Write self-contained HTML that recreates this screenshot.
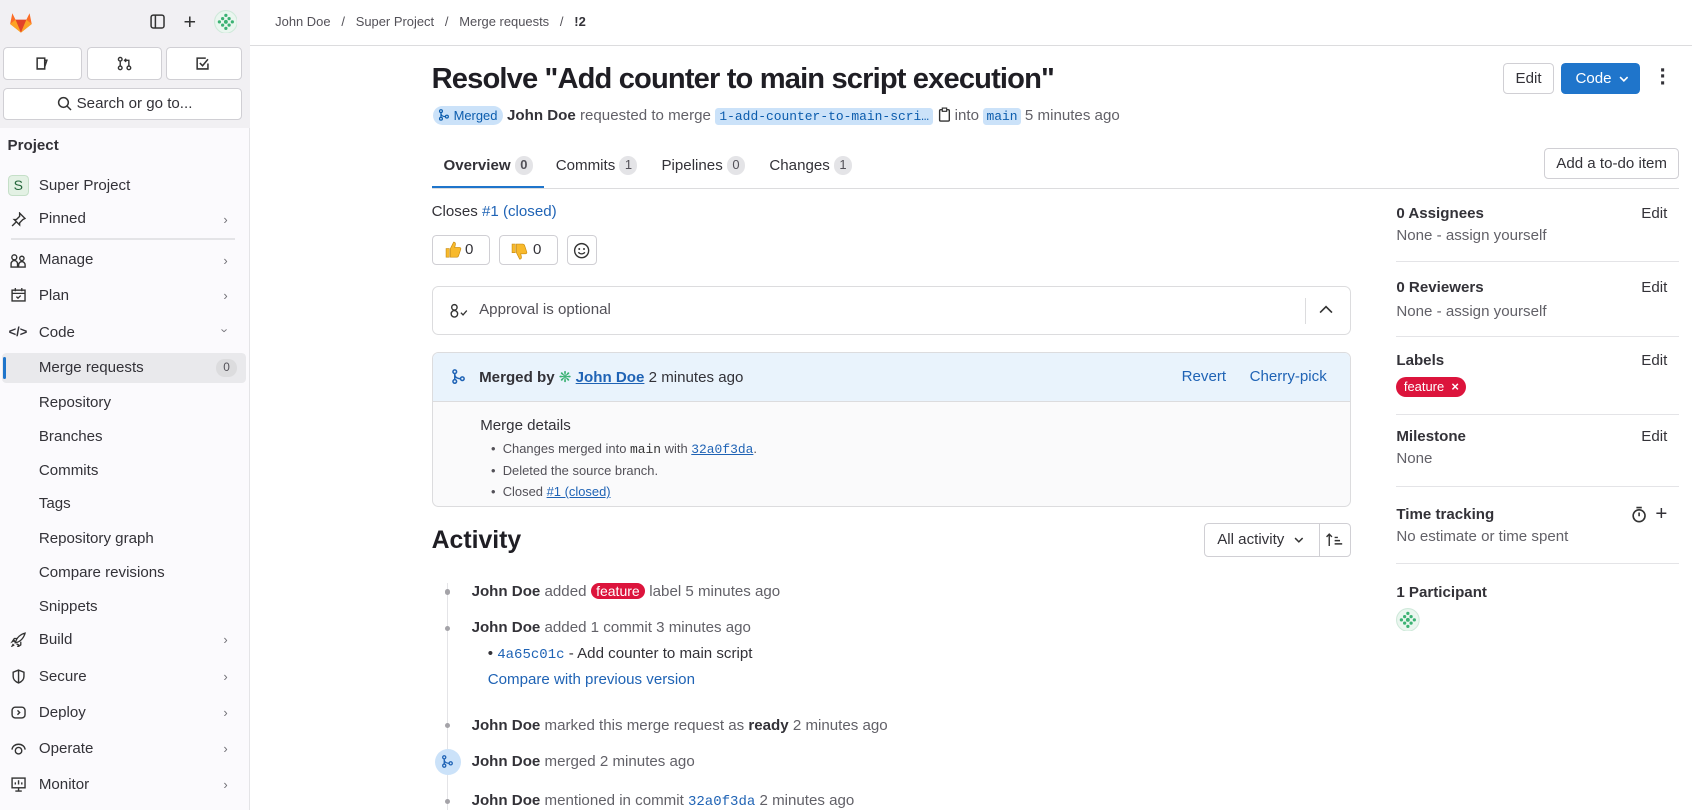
<!DOCTYPE html>
<html><head><meta charset="utf-8"><style>
*{box-sizing:border-box;margin:0;padding:0}
html,body{width:1692px;height:810px;overflow:hidden;background:#fff}
#w{zoom:1.0791;width:1568px;height:751px;position:relative;font-family:"Liberation Sans",sans-serif;font-size:14px;color:#333238;overflow:hidden}
.a{position:absolute;white-space:nowrap}
.sb{position:absolute;left:0;top:0;width:232px;height:751px;background:#fbfafd;border-right:1px solid #e4e4e7}
.sbt{position:absolute;left:0;top:0;width:232px;height:119px;background:#f1f0f3}
.btn{position:absolute;background:#fff;border:1px solid #d0cfd4;border-radius:4px}
.nav{position:absolute;left:36px;font-size:14px;color:#333238}
.chev{position:absolute;left:207px;color:#737278;font-size:12px}
.mono{font-family:"Liberation Mono",monospace}
.link{color:#1f63b5}
.badge{display:inline-block;background:#e4e4e7;border-radius:10px;font-size:12px;padding:0 5px;color:#535158;line-height:17px;vertical-align:1px}
.sep{position:absolute;left:1294px;width:262px;height:1px;background:#e4e4e7}
.rh{position:absolute;left:1294px;font-weight:bold;color:#333238}
.rs{position:absolute;left:1294px;color:#626168}
.re{position:absolute;left:1521px;color:#333238}
.dot{position:absolute;left:412px;width:5px;height:5px;border-radius:50%;background:#a4a3a8}
</style></head><body><div id="w">
<svg width="0" height="0" style="position:absolute"><defs><symbol id="mr" viewBox="0 0 14 14"><circle cx="3.5" cy="2.5" r="1.7" fill="none" stroke="currentColor" stroke-width="1.4"/><circle cx="3.5" cy="11.5" r="1.7" fill="none" stroke="currentColor" stroke-width="1.4"/><circle cx="10.5" cy="9" r="1.7" fill="none" stroke="currentColor" stroke-width="1.4"/><path d="M3.5 4.2v5.6M3.5 5c0 3 3 4 5.3 4" fill="none" stroke="currentColor" stroke-width="1.4"/></symbol></defs></svg>
<div class="sb"></div><div class="sbt"></div>
<svg class="a" style="left:7px;top:9px" width="24" height="22" viewBox="0 0 24 22"><path d="M12 21 2 13 4 3 7 9h10l3-6 2 10z" fill="#fc6d26"/><path d="M12 21 7 9h10z" fill="#e24329"/><path d="M12 21 2 13 7 9z" fill="#fca326"/><path d="M12 21l10-8-5-4z" fill="#fca326"/></svg>
<svg class="a" style="left:139px;top:13px" width="14" height="14" viewBox="0 0 14 14"><rect x="1" y="1" width="12" height="12" rx="2" fill="none" stroke="#333" stroke-width="1.4"/><path d="M5 1v12" stroke="#333" stroke-width="1.4"/></svg>
<div class="a" style="left:170px;top:8px;font-size:20px;color:#333">+</div>
<svg class="a" style="left:198px;top:9px" width="22" height="22" viewBox="0 0 22 22"><circle cx="11" cy="11" r="10.5" fill="#eaf6ef" stroke="#cfe9da"/><g fill="#3bb273"><circle cx="11" cy="5" r="1.5"/><circle cx="11" cy="17" r="1.5"/><circle cx="5" cy="11" r="1.5"/><circle cx="17" cy="11" r="1.5"/><circle cx="8" cy="8" r="1.5"/><circle cx="14" cy="8" r="1.5"/><circle cx="8" cy="14" r="1.5"/><circle cx="14" cy="14" r="1.5"/><circle cx="11" cy="11" r="1.8"/></g></svg>
<div class="btn" style="left:3px;top:44px;width:73px;height:30px"></div>
<div class="btn" style="left:81px;top:44px;width:69px;height:30px"></div>
<div class="btn" style="left:154px;top:44px;width:70px;height:30px"></div>
<svg class="a" style="left:32px;top:52px" width="14" height="14" viewBox="0 0 14 14"><path d="M2 2h7v10H2z M9 4h2l-2 6" fill="none" stroke="#333" stroke-width="1.4"/></svg>
<svg class="a" style="left:108px;top:52px" width="14" height="14" viewBox="0 0 14 14"><circle cx="3" cy="3" r="1.7" fill="none" stroke="#333" stroke-width="1.3"/><circle cx="3" cy="11" r="1.7" fill="none" stroke="#333" stroke-width="1.3"/><circle cx="11" cy="11" r="1.7" fill="none" stroke="#333" stroke-width="1.3"/><path d="M3 5v4M11 9V4H7m1.5-1.5L7 4l1.5 1.5" fill="none" stroke="#333" stroke-width="1.3"/></svg>
<svg class="a" style="left:181px;top:52px" width="14" height="14" viewBox="0 0 14 14"><path d="M12 7v5H2V2h8" fill="none" stroke="#333" stroke-width="1.4"/><path d="M4.5 6.5 7 9l5-6" fill="none" stroke="#333" stroke-width="1.4"/></svg>
<div class="btn" style="left:3px;top:82px;width:221px;height:29px"></div>
<svg class="a" style="left:53px;top:89px" width="14" height="14" viewBox="0 0 14 14"><circle cx="6" cy="6" r="4.5" fill="none" stroke="#333" stroke-width="1.4"/><path d="M9.5 9.5 13 13" stroke="#333" stroke-width="1.4"/></svg>
<div class="a" style="left:71px;top:88px;font-size:14px">Search or go to...</div>
<div class="a" style="left:7px;top:127px;font-weight:bold">Project</div>
<div class="a" style="left:7px;top:162px;width:20px;height:20px;background:#e3f1e4;border:1px solid #c5dfc8;border-radius:4px;text-align:center;line-height:18px;color:#24663b;font-size:13px">S</div>
<div class="nav" style="top:164px">Super Project</div>
<div class="nav" style="top:195px">Pinned</div><div class="chev" style="top:196px">›</div>
<svg class="a" style="left:10px;top:196px" width="14" height="14"><path d="M8 1l5 5-2 1-3 3 0 2-5-5 2 0 3-3zM4.5 9.5 1 13" fill="none" stroke="#333" stroke-width="1.3"/></svg>
<div class="a" style="left:10px;top:221px;width:208px;height:1px;background:#e4e4e7"></div>
<div class="nav" style="top:233px">Manage</div><div class="chev" style="top:234px">›</div>
<svg class="a" style="left:9px;top:234px" width="16" height="14"><circle cx="4" cy="4" r="2.3" fill="none" stroke="#333" stroke-width="1.3"/><circle cx="11" cy="5" r="2" fill="none" stroke="#333" stroke-width="1.3"/><path d="M1 13V10a3 3 0 0 1 6 0v3zM8 13v-2a3 3 0 0 1 6 0v2z" fill="none" stroke="#333" stroke-width="1.3"/></svg>
<div class="nav" style="top:266px">Plan</div><div class="chev" style="top:267px">›</div>
<svg class="a" style="left:10px;top:267px" width="14" height="14"><rect x="1" y="2" width="12" height="10" fill="none" stroke="#333" stroke-width="1.3"/><path d="M1 5h12M4 0v3M10 0v3M5 8l1.5 1.5L9 7" fill="none" stroke="#333" stroke-width="1.2"/></svg>
<div class="nav" style="top:300px">Code</div><div class="chev" style="top:299px;transform:rotate(90deg)">›</div><div class="a" style="left:8px;top:300px;font-size:12px;font-weight:bold">&lt;/&gt;</div>
<div class="a" style="left:2px;top:327px;width:226px;height:28px;background:#e9e9ec;border-radius:4px"></div>
<div class="a" style="left:3px;top:331px;width:3px;height:20px;background:#1f75cb;border-radius:2px"></div>
<div class="nav" style="top:333px">Merge requests</div>
<div class="a" style="left:200px;top:333px;width:20px;height:16px;background:#dcdcde;border-radius:8px;font-size:11px;text-align:center;line-height:16px;color:#535158">0</div>
<div class="nav" style="top:365px">Repository</div>
<div class="nav" style="top:397px">Branches</div>
<div class="nav" style="top:428px">Commits</div>
<div class="nav" style="top:459px">Tags</div>
<div class="nav" style="top:491px">Repository graph</div>
<div class="nav" style="top:523px">Compare revisions</div>
<div class="nav" style="top:554px">Snippets</div>
<div class="nav" style="top:585px">Build</div><div class="chev" style="top:586px">›</div>
<svg class="a" style="left:9px;top:586px" width="16" height="14"><path d="M3 11 2 13l2-1M5 10c1-5 5-8 9-9-1 4-4 8-9 9zM5 10 4 8 2 9l2-3h3M6 11l2 1-1 2 3-2V9" fill="none" stroke="#333" stroke-width="1.2"/></svg>
<div class="nav" style="top:619px">Secure</div><div class="chev" style="top:620px">›</div>
<svg class="a" style="left:10px;top:620px" width="14" height="14"><path d="M7 1 2 3v4c0 3 2.5 5 5 6 2.5-1 5-3 5-6V3z M7 1v12" fill="none" stroke="#333" stroke-width="1.3"/></svg>
<div class="nav" style="top:652px">Deploy</div><div class="chev" style="top:653px">›</div>
<svg class="a" style="left:10px;top:653px" width="14" height="14"><rect x="1" y="2" width="12" height="10" rx="3" fill="none" stroke="#333" stroke-width="1.3"/><path d="M6 5l2 2-2 2" fill="none" stroke="#333" stroke-width="1.3"/></svg>
<div class="nav" style="top:686px">Operate</div><div class="chev" style="top:687px">›</div>
<svg class="a" style="left:10px;top:687px" width="14" height="14"><path d="M1 8a6 5 0 0 1 12 0" fill="none" stroke="#333" stroke-width="1.3"/><circle cx="7" cy="9" r="3" fill="none" stroke="#333" stroke-width="1.3"/></svg>
<div class="nav" style="top:719px">Monitor</div><div class="chev" style="top:720px">›</div>
<svg class="a" style="left:10px;top:720px" width="14" height="14"><rect x="1" y="1" width="12" height="9" fill="none" stroke="#333" stroke-width="1.3"/><path d="M4 13h6M7 10v3M4 7V5M7 7V3M10 7V5" stroke="#333" stroke-width="1.3"/></svg>

<div class="a" style="left:232px;top:42px;width:1336px;height:1px;background:#dcdcde"></div>
<div class="a" style="left:255px;top:13px;font-size:12px;color:#535158">John Doe &nbsp;&nbsp;/&nbsp;&nbsp; Super Project &nbsp;&nbsp;/&nbsp;&nbsp; Merge requests &nbsp;&nbsp;/&nbsp;&nbsp; <b style="color:#333238">!2</b></div>

<div class="a" style="left:400px;top:58px;font-size:27px;font-weight:bold;color:#1f1e24;letter-spacing:-0.8px">Resolve "Add counter to main script execution"</div>
<div class="btn" style="left:1393px;top:58px;width:47px;height:29px;text-align:center;line-height:27px">Edit</div>
<div class="a" style="left:1447px;top:58px;width:73px;height:29px;background:#1f75cb;border-radius:4px;color:#fff;line-height:29px;padding-left:13px">Code</div>
<svg class="a" style="left:1500px;top:70px" width="9" height="6"><path d="M1 1l3.5 3.5L8 1" fill="none" stroke="#fff" stroke-width="1.5"/></svg>
<div class="a" style="left:1538px;top:62px;width:4px;line-height:6px;font-size:20px;font-weight:bold">·<br>·<br>·</div>

<div class="a" style="left:401px;top:98px;font-size:14px;color:#626168;line-height:18px">
<span style="display:inline-block;background:#cbe2f9;color:#0b5cad;border-radius:9px;padding:0 5px 0 5px;font-size:12px;line-height:18px"><svg width="11" height="11" style="vertical-align:-1px;color:#0b5cad"><use href="#mr"/></svg> Merged</span>
<b style="color:#333238">John Doe</b> requested to merge <span class="mono" style="background:#cbe2f9;color:#0b5cad;border-radius:3px;padding:1px 4px;font-size:12px">1-add-counter-to-main-scri…</span> <svg width="12" height="14" style="vertical-align:-2px"><rect x="1.5" y="2.5" width="9" height="10.5" rx="1" fill="none" stroke="#333" stroke-width="1.3"/><rect x="4" y="1" width="4" height="3" fill="#fff" stroke="#333" stroke-width="1.1"/></svg> into <span class="mono" style="background:#cbe2f9;color:#0b5cad;border-radius:3px;padding:1px 3px;font-size:12px">main</span> 5 minutes ago</div>

<div class="a" style="left:411px;top:145px;color:#333238;font-weight:bold">Overview <span class="badge">0</span></div>
<div class="a" style="left:515px;top:145px">Commits <span class="badge">1</span></div>
<div class="a" style="left:613px;top:145px">Pipelines <span class="badge">0</span></div>
<div class="a" style="left:713px;top:145px">Changes <span class="badge">1</span></div>
<div class="a" style="left:400px;top:174px;width:1156px;height:1px;background:#dcdcde"></div>
<div class="a" style="left:400px;top:172px;width:104px;height:2px;background:#1f75cb"></div>
<div class="btn" style="left:1431px;top:137px;width:125px;height:29px;text-align:center;line-height:27px">Add a to-do item</div>

<div class="a" style="left:400px;top:188px">Closes <span class="link">#1 (closed)</span></div>
<div class="btn" style="left:400px;top:218px;width:54px;height:28px;line-height:26px;padding-left:30px">0</div>
<svg class="a" style="left:412px;top:223px" width="16" height="16"><path d="M1 7h3v8H1zM5 7l3-6c1.5 0 2 1 1.5 3L9 6h4.5c1 0 1.5 1 1 2l-2 6c-.3.7-.8 1-1.5 1H5z" fill="#f8b92b" stroke="#c78b10" stroke-width=".6"/></svg>
<div class="btn" style="left:462px;top:218px;width:55px;height:28px;line-height:26px;padding-left:31px">0</div>
<svg class="a" style="left:474px;top:225px;transform:scaleY(-1)" width="16" height="16"><path d="M1 7h3v8H1zM5 7l3-6c1.5 0 2 1 1.5 3L9 6h4.5c1 0 1.5 1 1 2l-2 6c-.3.7-.8 1-1.5 1H5z" fill="#f8b92b" stroke="#c78b10" stroke-width=".6"/></svg>
<div class="btn" style="left:525px;top:218px;width:28px;height:28px"></div>
<svg class="a" style="left:531px;top:224px" width="16" height="16"><circle cx="8" cy="8" r="6.5" fill="none" stroke="#333" stroke-width="1.3"/><circle cx="5.8" cy="6.5" r=".9" fill="#333"/><circle cx="10.2" cy="6.5" r=".9" fill="#333"/><path d="M5 9.5c1.5 2 4.5 2 6 0" fill="none" stroke="#333" stroke-width="1.2"/></svg>

<div class="a" style="left:400px;top:265px;width:852px;height:45px;border:1px solid #dcdcde;border-radius:6px"></div>
<svg class="a" style="left:416px;top:281px" width="20" height="14"><circle cx="5" cy="4" r="2.5" fill="none" stroke="#333" stroke-width="1.3"/><circle cx="5" cy="10" r="3" fill="none" stroke="#333" stroke-width="1.3"/><path d="M11 9l2 2 3.5-4" fill="none" stroke="#333" stroke-width="1.2"/></svg>
<div class="a" style="left:444px;top:279px;color:#535158">Approval is optional</div>
<div class="a" style="left:1209px;top:276px;width:1px;height:24px;background:#dcdcde"></div>
<svg class="a" style="left:1222px;top:283px" width="13" height="8"><path d="M1 7l5.5-5.5L12 7" fill="none" stroke="#333" stroke-width="1.5"/></svg>

<div class="a" style="left:400px;top:326px;width:852px;height:144px;border:1px solid #dcdcde;border-radius:6px;background:#fafafb;overflow:hidden"><div style="height:46px;background:#e9f3fc;border-bottom:1px solid #dcdcde"></div></div>
<svg class="a" style="left:418px;top:342px;color:#1f63b5" width="14" height="14"><use href="#mr"/></svg>
<div class="a" style="left:444px;top:341px"><b>Merged by</b> <span style="color:#3bb273">❋</span> <u class="link" style="font-weight:bold">John Doe</u> 2 minutes ago</div>
<div class="a" style="left:1095px;top:341px"><span class="link">Revert</span></div>
<div class="a" style="left:1158px;top:341px"><span class="link">Cherry-pick</span></div>
<div class="a" style="left:445px;top:386px">Merge details</div>
<div class="a" style="left:455px;top:406px;font-size:12px;color:#535158;line-height:19.5px">• &nbsp;Changes merged into <span class="mono" style="color:#333">main</span> with <u class="mono link">32a0f3da</u>.<br>• &nbsp;Deleted the source branch.<br>• &nbsp;Closed <u class="link">#1 (closed)</u></div>

<div class="a" style="left:400px;top:488px;font-size:23px;font-weight:bold;color:#1f1e24">Activity</div>
<div class="btn" style="left:1116px;top:485px;width:136px;height:31px"></div>
<div class="a" style="left:1222px;top:485px;width:1px;height:31px;background:#d0cfd4"></div>
<div class="a" style="left:1128px;top:492px">All activity</div>
<svg class="a" style="left:1199px;top:498px" width="9" height="6"><path d="M1 1l3.5 3.5L8 1" fill="none" stroke="#333" stroke-width="1.4"/></svg>
<svg class="a" style="left:1229px;top:493px" width="16" height="14"><path d="M3 13V2M0.5 4.5 3 2l2.5 2.5M8 5h3M8 8h5M8 11h7" fill="none" stroke="#333" stroke-width="1.3"/></svg>

<div class="a" style="left:414px;top:540px;width:1px;height:211px;background:#e4e4e7"></div>
<div class="dot" style="top:546px"></div><div class="dot" style="top:580px"></div><div class="dot" style="top:670px"></div><div class="dot" style="top:740px"></div>
<div class="a" style="left:403px;top:694px;width:24px;height:24px;border-radius:50%;background:#cbe2f9"></div>
<svg class="a" style="left:409px;top:700px;color:#1f63b5" width="12" height="12"><use href="#mr"/></svg>
<div class="a" style="left:437px;top:540px;color:#626168"><b style="color:#333238">John Doe</b> added <span style="background:#dc143c;color:#fff;border-radius:9px;padding:0 5px;font-size:13px">feature</span> label 5 minutes ago</div>
<div class="a" style="left:437px;top:574px;color:#626168"><b style="color:#333238">John Doe</b> added 1 commit 3 minutes ago</div>
<div class="a" style="left:452px;top:598px;color:#333238">• <span class="mono link" style="font-size:13px">4a65c01c</span> - Add counter to main script</div>
<div class="a" style="left:452px;top:622px"><span class="link">Compare with previous version</span></div>
<div class="a" style="left:437px;top:664px;color:#626168"><b style="color:#333238">John Doe</b> marked this merge request as <b style="color:#333238">ready</b> 2 minutes ago</div>
<div class="a" style="left:437px;top:698px;color:#626168"><b style="color:#333238">John Doe</b> merged 2 minutes ago</div>
<div class="a" style="left:437px;top:734px;color:#626168"><b style="color:#333238">John Doe</b> mentioned in commit <span class="mono link" style="font-size:13px">32a0f3da</span> 2 minutes ago</div>

<div class="rh" style="top:190px">0 Assignees</div><div class="re" style="top:190px">Edit</div><div class="rs" style="top:210px">None - assign yourself</div>
<div class="sep" style="top:242px"></div>
<div class="rh" style="top:259px">0 Reviewers</div><div class="re" style="top:259px">Edit</div><div class="rs" style="top:281px">None - assign yourself</div>
<div class="sep" style="top:311px"></div>
<div class="rh" style="top:326px">Labels</div><div class="re" style="top:326px">Edit</div>
<div class="a" style="left:1294px;top:349px;height:19px;background:#dc143c;color:#fff;border-radius:10px;padding:0 7px;font-size:12px;line-height:19px">feature &nbsp;<b>×</b></div>
<div class="sep" style="top:384px"></div>
<div class="rh" style="top:397px">Milestone</div><div class="re" style="top:397px">Edit</div><div class="rs" style="top:417px">None</div>
<div class="sep" style="top:450px"></div>
<div class="rh" style="top:469px">Time tracking</div><div class="rs" style="top:489px">No estimate or time spent</div>
<svg class="a" style="left:1511px;top:469px" width="15" height="16"><circle cx="7.5" cy="9" r="5.5" fill="none" stroke="#333" stroke-width="1.5"/><path d="M5 1.5h5M7.5 6v3.5" stroke="#333" stroke-width="1.5"/></svg>
<div class="a" style="left:1534px;top:465px;font-size:19px">+</div>
<div class="sep" style="top:522px"></div>
<div class="rh" style="top:541px">1 Participant</div>
<svg class="a" style="left:1294px;top:563px" width="22" height="22" viewBox="0 0 22 22"><circle cx="11" cy="11" r="10.5" fill="#eaf6ef" stroke="#cfe9da"/><g fill="#3bb273"><circle cx="11" cy="5" r="1.5"/><circle cx="11" cy="17" r="1.5"/><circle cx="5" cy="11" r="1.5"/><circle cx="17" cy="11" r="1.5"/><circle cx="8" cy="8" r="1.5"/><circle cx="14" cy="8" r="1.5"/><circle cx="8" cy="14" r="1.5"/><circle cx="14" cy="14" r="1.5"/><circle cx="11" cy="11" r="1.8"/></g></svg>
</div></body></html>
